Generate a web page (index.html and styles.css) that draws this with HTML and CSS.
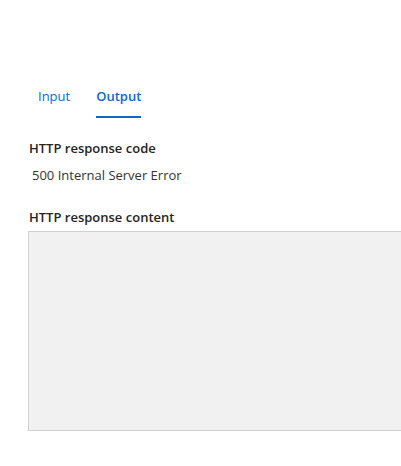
FILE: index.html
```html
<!DOCTYPE html>
<html>
<head>
<meta charset="utf-8">
<link rel="stylesheet" href="styles.css">
</head>
<body>
<div class="panel">
  <div class="tabs">
    <div class="tab">Input</div>
    <div class="tab active">Output</div>
  </div>
  <div class="field">
    <div class="label">HTTP response code</div>
    <div class="value">500 Internal Server Error</div>
  </div>
  <div class="field">
    <div class="label">HTTP response content</div>
    <div class="content-box"></div>
  </div>
</div>
</body>
</html>
```
FILE: styles.css
```css
html, body {
  margin: 0;
  padding: 0;
  background: #ffffff;
  font-family: "Open Sans", "Noto Sans", sans-serif;
  font-size: 13px;
  color: #242424;
}
.panel {
  padding: 80px 0 0 28px;
}
.tabs {
  display: flex;
  gap: 26px;
  padding-left: 10px;
}
.tab {
  color: #1667d0;
  font-size: 13px;
  line-height: 18px;
  padding: 7px 0 11px;
  border-bottom: 2px solid transparent;
}
.tab.active {
  color: #0f66cc;
  font-weight: 600;
  border-bottom-color: #0f66cc;
}
.field {
  margin-top: 21px;
}
.field + .field {
  margin-top: 24px;
}
.label {
  font-weight: 600;
  line-height: 18px;
  padding-left: 1px;
}
.value {
  margin-top: 9px;
  padding-left: 4px;
  line-height: 18px;
  color: #333333;
}
.content-box {
  margin-top: 5px;
  height: 198px;
  background: #f1f1f1;
  border: 1px solid #d1d1d1;
  border-right: none;
}
```
